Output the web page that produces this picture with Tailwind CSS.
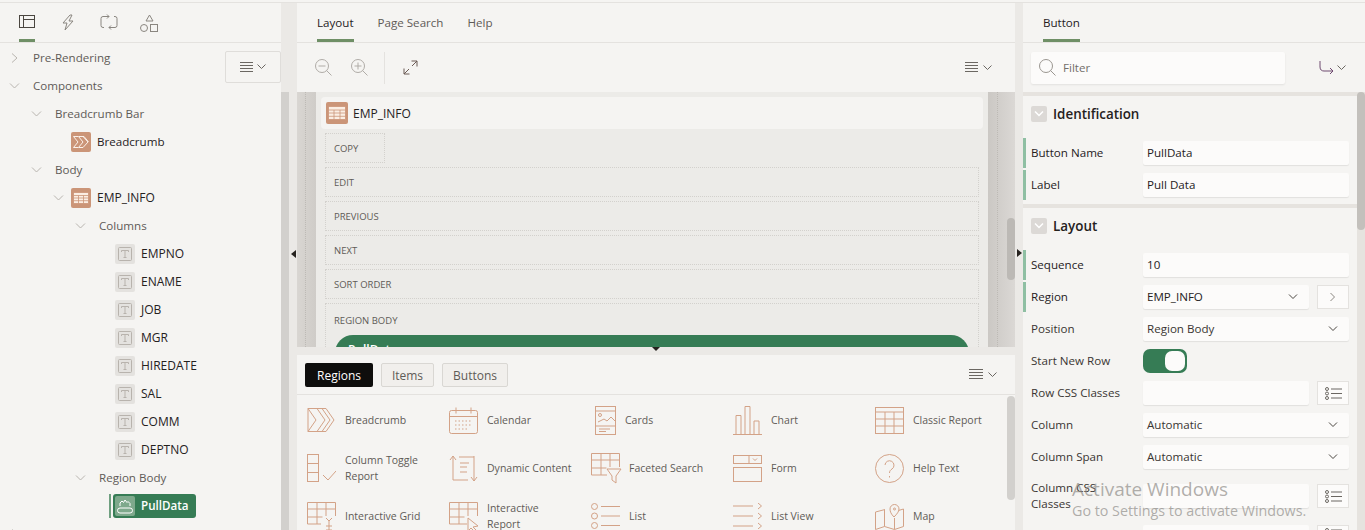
<!DOCTYPE html>
<html lang="en">
<head>
  <meta charset="UTF-8" />
  <title>Page Designer</title>
  <script src="https://cdn.jsdelivr.net/npm/@tailwindcss/browser@4"></script>
</head>
<body class="bg-[#f5f4f2] font-['Open_Sans',sans-serif] text-[11.6px] text-[#5f5b57]">
<div class="relative flex h-[530px] w-[1365px] overflow-hidden pt-[3px]">
  <div class="absolute left-0 top-[2px] h-px w-full bg-[#e4e2df]"></div>

  <!-- left panel -->
  <div class="flex h-full w-[281px] shrink-0 flex-col">
    <div class="flex h-[40px] shrink-0 border-b border-[#e4e2df] pl-[19px] pt-[11px]">
      <div class="h-[28px] w-[16px] border-b-[3px] border-[#6f8f66]">
        <svg width="16" height="15" viewBox="0 0 16 15" fill="none" stroke="#4a4640"><rect x=".5" y="1.500" width="15" height="12"/><path d="M4.500 1.500v12M4.500 5.500h11"/></svg>
      </div>
      <svg class="ml-[26px]" width="14" height="17" viewBox="0 0 14 17" fill="none" stroke="#8a8680"><path d="M9 1 2 9h4l-2 7 8-9H8l3-6z"/></svg>
      <svg class="ml-[25px]" width="18" height="17" viewBox="0 0 18 17" fill="none" stroke="#8a8680"><path d="M9 2.500H3a2 2 0 0 0-2 2v7a2 2 0 0 0 2 2h1M7 .5l2 2-2 2M9 13.500h6a2 2 0 0 0 2-2v-7a2 2 0 0 0-2-2h-1M11 11.500l-2 2 2 2"/></svg>
      <svg class="ml-[22px]" width="18" height="19" viewBox="0 0 18 19" fill="none" stroke="#8a8680"><path d="m9.500 1 3.500 6H6z"/><circle cx="4" cy="14" r="3.500"/><rect x="10.500" y="10.500" width="7" height="7"/></svg>
    </div>
    <div class="relative flex-1 overflow-hidden pt-px">
      <div class="flex h-7 items-center pl-[11px]">
        <svg class="w-[22px]" width="8" height="10" viewBox="0 0 22 10" fill="none" stroke="#b8b4af"><path d="m1 .5 5 4.500-5 4.500"/></svg>
        <span>Pre-Rendering</span>
      </div>
      <div class="flex h-7 items-center pl-[9px]">
        <svg class="w-[24px]" height="6" viewBox="0 0 24 6" fill="none" stroke="#b8b4af"><path d="m1 .5 4.500 4.500L10 .5"/></svg>
        <span>Components</span>
      </div>
      <div class="flex h-7 items-center pl-[31px]">
        <svg class="w-[24px]" height="6" viewBox="0 0 24 6" fill="none" stroke="#b8b4af"><path d="m1 .5 4.500 4.500L10 .5"/></svg>
        <span>Breadcrumb Bar</span>
      </div>
      <div class="flex h-7 items-center gap-[6px] pl-[71px] text-[#25211d]">
        <div class="flex h-5 w-5 items-center justify-center rounded-[2px] bg-[#cb9578]">
          <svg width="16" height="12" viewBox="0 0 16 12" fill="none" stroke="#fbf1ea"><path d="M.5.500h5L10 6l-4.500 5.500h-5L5 6zM6 .5h4L15 6l-5 5.500H6M10 .5h1L15.500 6"/></svg>
        </div>
        <span>Breadcrumb</span>
      </div>
      <div class="flex h-7 items-center pl-[31px]">
        <svg class="w-[24px]" height="6" viewBox="0 0 24 6" fill="none" stroke="#b8b4af"><path d="m1 .5 4.500 4.500L10 .5"/></svg>
        <span>Body</span>
      </div>
      <div class="flex h-7 items-center pl-[53px] text-[12px] text-[#25211d]">
        <svg class="w-[18px]" height="6" viewBox="0 0 18 6" fill="none" stroke="#b8b4af"><path d="m1 .5 4.500 4.500L10 .5"/></svg>
        <div class="mr-[6px] flex h-5 w-5 items-center justify-center rounded-[2px] bg-[#cb9578]">
          <svg width="16" height="12" viewBox="0 0 16 12" fill="#fbeee3" stroke="#cb9578" stroke-width=".8"><rect x=".5" y=".5" width="15" height="11" fill="#fbeee3"/><path d="M.5 3.500h15M.5 6h15M.5 8.700h15M5.500 3.500v8M10.500 3.500v8"/></svg>
        </div>
        <span>EMP_INFO</span>
      </div>
      <div class="flex h-7 items-center pl-[75px]">
        <svg class="w-[24px]" height="6" viewBox="0 0 24 6" fill="none" stroke="#b8b4af"><path d="m1 .5 4.500 4.500L10 .5"/></svg>
        <span>Columns</span>
      </div>
      <div class="flex h-7 items-center gap-[6px] pl-[115px] text-[12px] text-[#25211d]"><div class="flex h-5 w-5 items-center justify-center rounded-[2px] bg-[#e4e2df]"><svg width="14" height="14" viewBox="0 0 14 14" fill="none" stroke="#b8b3ad"><rect x=".5" y=".5" width="13" height="13" rx="1"/><path d="M3.500 5V3.500h7V5M7 3.500v7M5.500 10.500h3"/></svg></div><span>EMPNO</span></div>
      <div class="flex h-7 items-center gap-[6px] pl-[115px] text-[12px] text-[#25211d]"><div class="flex h-5 w-5 items-center justify-center rounded-[2px] bg-[#e4e2df]"><svg width="14" height="14" viewBox="0 0 14 14" fill="none" stroke="#b8b3ad"><rect x=".5" y=".5" width="13" height="13" rx="1"/><path d="M3.500 5V3.500h7V5M7 3.500v7M5.500 10.500h3"/></svg></div><span>ENAME</span></div>
      <div class="flex h-7 items-center gap-[6px] pl-[115px] text-[12px] text-[#25211d]"><div class="flex h-5 w-5 items-center justify-center rounded-[2px] bg-[#e4e2df]"><svg width="14" height="14" viewBox="0 0 14 14" fill="none" stroke="#b8b3ad"><rect x=".5" y=".5" width="13" height="13" rx="1"/><path d="M3.500 5V3.500h7V5M7 3.500v7M5.500 10.500h3"/></svg></div><span>JOB</span></div>
      <div class="flex h-7 items-center gap-[6px] pl-[115px] text-[12px] text-[#25211d]"><div class="flex h-5 w-5 items-center justify-center rounded-[2px] bg-[#e4e2df]"><svg width="14" height="14" viewBox="0 0 14 14" fill="none" stroke="#b8b3ad"><rect x=".5" y=".5" width="13" height="13" rx="1"/><path d="M3.500 5V3.500h7V5M7 3.500v7M5.500 10.500h3"/></svg></div><span>MGR</span></div>
      <div class="flex h-7 items-center gap-[6px] pl-[115px] text-[12px] text-[#25211d]"><div class="flex h-5 w-5 items-center justify-center rounded-[2px] bg-[#e4e2df]"><svg width="14" height="14" viewBox="0 0 14 14" fill="none" stroke="#b8b3ad"><rect x=".5" y=".5" width="13" height="13" rx="1"/><path d="M3.500 5V3.500h7V5M7 3.500v7M5.500 10.500h3"/></svg></div><span>HIREDATE</span></div>
      <div class="flex h-7 items-center gap-[6px] pl-[115px] text-[12px] text-[#25211d]"><div class="flex h-5 w-5 items-center justify-center rounded-[2px] bg-[#e4e2df]"><svg width="14" height="14" viewBox="0 0 14 14" fill="none" stroke="#b8b3ad"><rect x=".5" y=".5" width="13" height="13" rx="1"/><path d="M3.500 5V3.500h7V5M7 3.500v7M5.500 10.500h3"/></svg></div><span>SAL</span></div>
      <div class="flex h-7 items-center gap-[6px] pl-[115px] text-[12px] text-[#25211d]"><div class="flex h-5 w-5 items-center justify-center rounded-[2px] bg-[#e4e2df]"><svg width="14" height="14" viewBox="0 0 14 14" fill="none" stroke="#b8b3ad"><rect x=".5" y=".5" width="13" height="13" rx="1"/><path d="M3.500 5V3.500h7V5M7 3.500v7M5.500 10.500h3"/></svg></div><span>COMM</span></div>
      <div class="flex h-7 items-center gap-[6px] pl-[115px] text-[12px] text-[#25211d]"><div class="flex h-5 w-5 items-center justify-center rounded-[2px] bg-[#e4e2df]"><svg width="14" height="14" viewBox="0 0 14 14" fill="none" stroke="#b8b3ad"><rect x=".5" y=".5" width="13" height="13" rx="1"/><path d="M3.500 5V3.500h7V5M7 3.500v7M5.500 10.500h3"/></svg></div><span>DEPTNO</span></div>
      <div class="flex h-7 items-center pl-[75px]">
        <svg class="w-[24px]" height="6" viewBox="0 0 24 6" fill="none" stroke="#b8b4af"><path d="m1 .5 4.500 4.500L10 .5"/></svg>
        <span>Region Body</span>
      </div>
      <div class="flex h-7 items-center pl-[109px]">
        <div class="h-6 w-[2px] bg-[#6f9f80]"></div>
        <div class="ml-[2px] flex h-6 w-[83px] items-center gap-[6px] rounded-[3px] bg-[#367c55] pl-[2px] font-semibold text-white">
          <div class="flex h-5 w-5 items-center justify-center rounded-[2px] bg-[#7ea98c]">
            <svg width="16" height="16" viewBox="0 0 16 16" fill="none" stroke="#fff"><rect x=".5" y="10" width="15" height="5" rx="2.500"/><path d="M3 8V5l2-2 1.500 1.500L8 2l2 2.500L11 3.500l2 2V8"/></svg>
          </div>
          <span>PullData</span>
        </div>
      </div>
      <div class="flex h-7 items-center pl-[11px]">
        <svg class="w-[22px]" width="8" height="10" viewBox="0 0 22 10" fill="none" stroke="#b8b4af"><path d="m1 .5 5 4.500-5 4.500"/></svg>
        <span>Post-Rendering</span>
      </div>
      <div class="absolute left-[225px] top-[8px] flex h-[32px] w-[56px] items-center justify-center gap-[4px] rounded-[2px] border border-[#dfddda]">
        <svg width="13" height="11" viewBox="0 0 13 11" fill="none" stroke="#6b6762"><path d="M0 .5h13M0 3.500h13M0 6.500h13M0 9.500h13"/></svg>
        <svg width="9" height="6" viewBox="0 0 9 6" fill="none" stroke="#6b6762"><path d="m.5.500 4 4 4-4"/></svg>
      </div>
    </div>
  </div>

  <!-- left splitter -->
  <div class="flex w-[16px] shrink-0 bg-[#ebe9e6]">
    <div class="mt-[89px] h-[438px] w-[8px] bg-[#d2d0cd]"></div>
    <div class="flex w-[8px] items-center justify-center"><div class="mb-[26px] border-y-[4px] border-r-[5px] border-y-transparent border-r-[#26221e]"></div></div>
  </div>

  <!-- center -->
  <div class="flex h-full w-[718px] shrink-0 flex-col">
    <div class="flex h-[40px] shrink-0 gap-[24px] border-b border-[#e4e2df] pl-[20px]">
      <div class="h-[39px] border-b-[3px] border-[#6f8f66] pt-[12px] leading-[16px] text-[#25211d]">Layout</div>
      <div class="h-[39px] pt-[12px] leading-[16px]">Page Search</div>
      <div class="h-[39px] pt-[12px] leading-[16px]">Help</div>
    </div>
    <div class="flex h-[49px] shrink-0 items-center pl-[18px] pr-[23px]">
      <svg width="17" height="17" viewBox="0 0 17 17" fill="none" stroke="#b0aca7"><circle cx="7" cy="7" r="6.500"/><path d="M3.500 7h7M11.500 11.500l5 5"/></svg>
      <svg class="ml-[19px]" width="17" height="17" viewBox="0 0 17 17" fill="none" stroke="#b0aca7"><circle cx="7" cy="7" r="6.500"/><path d="M3.500 7h7M7 3.500v7M11.500 11.500l5 5"/></svg>
      <div class="ml-[16px] h-[32px] w-px bg-[#e4e2df]"></div>
      <svg class="ml-[18px]" width="15" height="15" viewBox="0 0 15 15" fill="none" stroke="#6b5a55"><path d="M1 14 6 9M9 6l5-5M8.500 1H14v5.500M1 8.500V14h5.500"/></svg>
      <div class="ml-auto flex items-center gap-[5px]">
        <svg width="13" height="11" viewBox="0 0 13 11" fill="none" stroke="#6b6762"><path d="M0 .5h13M0 3.500h13M0 6.500h13M0 9.500h13"/></svg>
        <svg width="9" height="6" viewBox="0 0 9 6" fill="none" stroke="#6b6762"><path d="m.5.500 4 4 4-4"/></svg>
      </div>
    </div>
    <div class="flex h-[255px] shrink-0 overflow-hidden bg-[#d9d6d2]">
      <div class="w-[19px] shrink-0 bg-gradient-to-r from-[#d9d6d2] to-[#cfccc8]"><div class="ml-[8px] h-full border-l border-dotted border-[#bdbab5]"></div></div>
      <div class="w-[672px] shrink-0 bg-[#ecebe8] px-[5px] pt-[5px]">
        <div class="flex h-[32px] items-center gap-[5px] rounded-[4px] bg-[#f5f4f2] pl-[5px] text-[12px] text-[#25211d]">
          <div class="flex h-[22px] w-[22px] items-center justify-center rounded-[2px] bg-[#cb9578]">
            <svg width="18" height="14" viewBox="0 0 18 14" stroke="#cb9578" stroke-width=".8"><rect x=".5" y=".5" width="17" height="13" fill="#fbeee3"/><path d="M.5 4h17M.5 7h17M.5 10.300h17M6 4v9.500M12 4v9.500"/></svg>
          </div>
          <span class="pt-px">EMP_INFO</span>
        </div>
        <div class="ml-[4px] mt-[4px] flex h-[30px] w-[60px] items-center border border-dotted border-[#d3d1cd] pl-[8px] pt-[2px] text-[9.500px]">COPY</div>
        <div class="ml-[4px] mt-[4px] flex h-[30px] w-[654px] items-center border border-dotted border-[#d3d1cd] pl-[8px] pt-[2px] text-[9.500px]">EDIT</div>
        <div class="ml-[4px] mt-[4px] flex h-[30px] w-[654px] items-center border border-dotted border-[#d3d1cd] pl-[8px] pt-[2px] text-[9.500px]">PREVIOUS</div>
        <div class="ml-[4px] mt-[4px] flex h-[30px] w-[654px] items-center border border-dotted border-[#d3d1cd] pl-[8px] pt-[2px] text-[9.500px]">NEXT</div>
        <div class="ml-[4px] mt-[4px] flex h-[30px] w-[654px] items-center border border-dotted border-[#d3d1cd] pl-[8px] pt-[2px] text-[9.500px]">SORT ORDER</div>
        <div class="ml-[4px] mt-[4px] h-[60px] w-[654px] border border-dotted border-[#d3d1cd] pl-[8px] pt-[10px] text-[9.500px]">
          <div class="leading-[14px]">REGION BODY</div>
          <div class="ml-px mt-[7px] h-[36px] w-[634px] rounded-[18px] bg-[#367c55] pl-[13px] pt-[6px] text-[12px] font-semibold text-white">PullData</div>
        </div>
      </div>
      <div class="relative flex-1 bg-gradient-to-r from-[#cbc8c4] to-[#dbd8d5]">
        <div class="ml-[9px] h-full border-l border-dotted border-[#bdbab5]"></div>
        <div class="absolute right-0 top-[126px] h-[62px] w-[8px] rounded-[4px] bg-[#bcb9b5]"></div>
      </div>
    </div>
    <div class="flex h-[8px] shrink-0 items-start justify-center bg-[#ebe9e6]">
      <div class="border-x-[4px] border-t-[4px] border-x-transparent border-t-[#26221e]"></div>
    </div>
    <div class="flex h-[40px] shrink-0 items-center gap-[8px] border-b border-[#e4e2df] pl-[8px] pr-[18px]">
      <div class="flex h-[24px] w-[68px] items-center justify-center rounded-[2px] bg-[#0f0e0d] pt-[2px] text-[12px] text-white">Regions</div>
      <div class="flex h-[24px] w-[53px] items-center justify-center rounded-[2px] border border-[#d9d7d3] bg-[#f1efec] pt-[2px] text-[12px]">Items</div>
      <div class="flex h-[24px] w-[66px] items-center justify-center rounded-[2px] border border-[#d9d7d3] bg-[#f1efec] pt-[2px] text-[12px]">Buttons</div>
      <div class="ml-auto flex items-center gap-[5px]">
        <svg width="14" height="11" viewBox="0 0 14 11" fill="none" stroke="#6b6762"><path d="M0 .5h14M0 3.500h14M0 6.500h14M0 9.500h14"/></svg>
        <svg width="9" height="6" viewBox="0 0 9 6" fill="none" stroke="#6b6762"><path d="m.5.500 4 4 4-4"/></svg>
      </div>
    </div>
    <div class="relative grid flex-1 auto-rows-[48px] grid-cols-[142px_142px_142px_142px_142px] overflow-hidden pl-[10px] pt-px text-[10.500px] leading-[16px]">
      <div class="flex items-center gap-[9px]">
        <svg class="shrink-0" width="29" height="26" viewBox="0 0 29 26" fill="none" stroke="#d3a287"><path d="M1 1.500h9l8 11.500-8 11.500H1zM1 1.500l8 11.500-8 11.500M10 1.500h9l8 11.500-8 11.500h-9M19 1.500h-4l8 11.500-8 11.500h4"/></svg>
        <span>Breadcrumb</span>
      </div>
      <div class="flex items-center gap-[9px]">
        <svg class="shrink-0" width="29" height="27" viewBox="0 0 29 27" fill="none" stroke="#d3a287"><rect x=".5" y="3.500" width="28" height="23" rx="2"/><path d="M.5 9.500h28M7 .5v6M22 .5v6"/><path d="M6 14h17M6 18h17M6 22h14" stroke-dasharray="1.500 2"/></svg>
        <span>Calendar</span>
      </div>
      <div class="flex items-center gap-[9px]">
        <svg class="mx-[4px] shrink-0" width="21" height="29" viewBox="0 0 21 29" fill="none" stroke="#d3a287"><rect x=".5" y=".5" width="20" height="28"/><path d="M.5 5h20M.5 20h20"/><circle cx="5" cy="9" r="1.500"/><path d="m3 16 6-3 3 2 4-4 4 4M4 23h11M4 25.500h7"/></svg>
        <span class="-ml-[4px]">Cards</span>
      </div>
      <div class="flex items-center gap-[9px]">
        <svg class="shrink-0" width="29" height="29" viewBox="0 0 29 29" fill="none" stroke="#d3a287"><path d="M0 28.500h29M3 28V9.500h5V28M12 28V.5h5V28M21 28V15h5v13"/></svg>
        <span>Chart</span>
      </div>
      <div class="flex items-center gap-[9px]">
        <svg class="shrink-0" width="29" height="27" viewBox="0 0 29 27" fill="none" stroke="#d3a287"><rect x=".5" y=".5" width="28" height="26"/><path d="M.5 5h28M.5 12h28M.5 19h28M10 5v22M19 5v22"/></svg>
        <span>Classic Report</span>
      </div>

      <div class="flex items-center gap-[9px]">
        <svg class="shrink-0" width="29" height="28" viewBox="0 0 29 28" fill="none" stroke="#d3a287"><rect x=".5" y=".5" width="11" height="27"/><path d="M.5 9.500h11M.5 18.500h11M16 21l5 5 8-9"/></svg>
        <span>Column Toggle<br>Report</span>
      </div>
      <div class="flex items-center gap-[9px]">
        <svg class="shrink-0" width="29" height="27" viewBox="0 0 29 27" fill="none" stroke="#d3a287"><path d="M4 25V1M1 5l3-4 3 4M25 1v25M22 22l3 4 3-4M10 2h15M4 25h15M11 8h9M11 12h7M11 17h7"/></svg>
        <span>Dynamic Content</span>
      </div>
      <div class="flex items-center gap-[9px]">
        <svg class="shrink-0" width="31" height="31" viewBox="0 0 31 31" fill="none" stroke="#d3a287"><path d="M16 22H.5V.5h28V14M.5 7h28M.5 15h15M10 .5V22M19 .5V14"/><path d="m16 16 14 0-5 7v7l-4-3v-4z"/></svg>
        <span class="-ml-[2px]">Faceted Search</span>
      </div>
      <div class="flex items-center gap-[9px]">
        <svg class="shrink-0" width="29" height="27" viewBox="0 0 29 27" fill="none" stroke="#d3a287"><rect x=".5" y=".5" width="28" height="8"/><path d="M16 .5v8M20 3.500l2 2 2-2"/><rect x=".5" y="12.500" width="28" height="14"/></svg>
        <span>Form</span>
      </div>
      <div class="flex items-center gap-[9px]">
        <svg class="shrink-0" width="29" height="29" viewBox="0 0 29 29" fill="none" stroke="#d3a287"><circle cx="14.500" cy="14.500" r="14"/><path d="M10 11a4.500 4.500 0 1 1 7 4c-1.500 1-2.500 2-2.500 4M14.500 22v1.500"/></svg>
        <span>Help Text</span>
      </div>

      <div class="flex items-center gap-[9px]">
        <svg class="shrink-0" width="29" height="29" viewBox="0 0 29 29" fill="none" stroke="#d3a287"><path d="M14 22H.5V.5h28V14M.5 7h28M.5 15h15M10 .5V22M19 .5V14M19 16l3 3 3-3M22 19v10M19 24h6M19 28h6"/></svg>
        <span>Interactive Grid</span>
      </div>
      <div class="flex items-center gap-[9px]">
        <svg class="shrink-0" width="31" height="29" viewBox="0 0 31 29" fill="none" stroke="#d3a287"><path d="M18 22H.5V.5h28V14M.5 7h28M.5 15h15M10 .5V22M19 .5V14M19 16v13l3-3 3 3 2-1-3-3 5-1z"/></svg>
        <span class="-ml-[2px]">Interactive<br>Report</span>
      </div>
      <div class="flex items-center gap-[9px]">
        <svg class="shrink-0" width="29" height="26" viewBox="0 0 29 26" fill="none" stroke="#d3a287"><circle cx="3.500" cy="3.500" r="3"/><circle cx="3.500" cy="13" r="3"/><circle cx="3.500" cy="22.500" r="3"/><path d="M10 3.500h19M10 13h19M10 22.500h19"/></svg>
        <span>List</span>
      </div>
      <div class="flex items-center gap-[9px]">
        <svg class="shrink-0" width="29" height="26" viewBox="0 0 29 26" fill="none" stroke="#d3a287"><path d="M0 3h20M0 13h20M0 23h20M25 0l3.500 3L25 6M25 10l3.500 3-3.500 3M25 20l3.500 3-3.500 3"/></svg>
        <span>List View</span>
      </div>
      <div class="flex items-center gap-[9px]">
        <svg class="shrink-0" width="29" height="27" viewBox="0 0 29 27" fill="none" stroke="#d3a287"><path d="M10 6.500 .5 9v17.500l9-3 10 3 9-3V6l-5 1.500M9.500 7v16.500M19.500 15v11.500"/><path d="M19 14c-3-3-4-5.500-4-8a4.500 4.500 0 0 1 9 0c0 2.500-2 5-5 8z"/><circle cx="19.500" cy="6" r="1"/></svg>
        <span>Map</span>
      </div>
      <div class="absolute right-0 top-[1px] h-[104px] w-[8px] rounded-[4px] bg-[#d2d0cd]"></div>
    </div>
  </div>

  <!-- right splitter -->
  <div class="flex w-[8px] shrink-0 items-center justify-center bg-[#ebe9e6] pb-[2px]">
    <div class="mb-[26px] border-y-[4px] border-l-[5px] border-y-transparent border-l-[#26221e]"></div>
  </div>

  <!-- property editor -->
  <div class="flex h-full w-[342px] shrink-0 flex-col">
    <div class="flex h-[40px] shrink-0 border-b border-[#e4e2df] pl-[20px]">
      <div class="h-[39px] border-b-[3px] border-[#6f8f66] pt-[12px] leading-[16px] text-[#25211d]">Button</div>
    </div>
    <div class="flex h-[49px] shrink-0 items-center pl-[8px] pr-[19px]">
      <div class="flex h-[32px] w-[254px] items-center gap-[7px] rounded-[2px] bg-[#fcfbfa] pl-[8px] shadow-[0_1px_2px_rgba(0,0,0,0.08)]">
        <svg width="17" height="17" viewBox="0 0 17 17" fill="none" stroke="#9a9690"><circle cx="7" cy="7" r="6.500"/><path d="m11.500 11.500 5 5"/></svg>
        <span class="text-[#736f6a]">Filter</span>
      </div>
      <div class="ml-auto flex items-center gap-[3px]">
        <svg width="15" height="14" viewBox="0 0 15 14" fill="none" stroke="#6e4a70"><path d="M1 0v6c0 3 2 4 4 4h9M11 7l3 3-3 3"/></svg>
        <svg width="9" height="6" viewBox="0 0 9 6" fill="none" stroke="#6b6762"><path d="m.5.500 4 4 4-4"/></svg>
      </div>
    </div>
    <div class="flex flex-1 overflow-hidden">
      <div class="w-[334px] shrink-0 overflow-hidden">
        <div class="h-[4px] bg-[#e6e3df]"></div>
        <div class="mb-[5px] flex h-[36px] items-center gap-[6px] pl-[8px] text-[13.400px] font-semibold text-[#25211d]">
          <div class="flex h-4 w-4 items-center justify-center rounded-[2px] bg-[#dcd9d6]"><svg width="10" height="6" viewBox="0 0 10 6" fill="none" stroke="#fff" stroke-width="1.500"><path d="m1 .5 4 4 4-4"/></svg></div>
          <span>Identification</span>
        </div>
        <div class="flex h-8 items-center"><div class="h-[30px] w-[3px] bg-[#8fbfa3]"></div><span class="w-[117px] pl-[5px] text-[#25211d]">Button Name</span><div class="flex h-6 w-[206px] items-center rounded-[2px] bg-[#fcfbfa] pl-[4px] text-[#25211d] shadow-[0_1px_1px_rgba(0,0,0,0.08)]">PullData</div></div>
        <div class="flex h-8 items-center"><div class="h-[30px] w-[3px] bg-[#8fbfa3]"></div><span class="w-[117px] pl-[5px] text-[#25211d]">Label</span><div class="flex h-6 w-[206px] items-center rounded-[2px] bg-[#fcfbfa] pl-[4px] text-[#25211d] shadow-[0_1px_1px_rgba(0,0,0,0.08)]">Pull Data</div></div>
        <div class="mt-[3px] h-[4px] bg-[#e6e3df]"></div>
        <div class="mb-[5px] flex h-[36px] items-center gap-[6px] pl-[8px] text-[13.400px] font-semibold text-[#25211d]">
          <div class="flex h-4 w-4 items-center justify-center rounded-[2px] bg-[#dcd9d6]"><svg width="10" height="6" viewBox="0 0 10 6" fill="none" stroke="#fff" stroke-width="1.500"><path d="m1 .5 4 4 4-4"/></svg></div>
          <span>Layout</span>
        </div>
        <div class="flex h-8 items-center"><div class="h-[30px] w-[3px] bg-[#8fbfa3]"></div><span class="w-[117px] pl-[5px] text-[#25211d]">Sequence</span><div class="flex h-6 w-[206px] items-center rounded-[2px] bg-[#fcfbfa] pl-[4px] text-[#25211d] shadow-[0_1px_1px_rgba(0,0,0,0.08)]">10</div></div>
        <div class="flex h-8 items-center"><div class="h-[30px] w-[3px] bg-[#8fbfa3]"></div><span class="w-[117px] pl-[5px] text-[#25211d]">Region</span>
          <div class="flex h-6 w-[166px] items-center justify-between rounded-[2px] bg-[#fcfbfa] pl-[4px] pr-[11px] text-[#25211d] shadow-[0_1px_1px_rgba(0,0,0,0.08)]">EMP_INFO<svg width="10" height="6" viewBox="0 0 10 6" fill="none" stroke="#4a4640"><path d="m1 .5 4 4 4-4"/></svg></div>
          <div class="ml-[8px] flex h-[24px] w-[32px] items-center justify-center border border-[#e4e2df] bg-[#fcfbfa]"><svg width="6" height="10" viewBox="0 0 6 10" fill="none" stroke="#8a8680"><path d="m.5 1 4 4-4 4"/></svg></div>
        </div>
        <div class="flex h-8 items-center pl-[3px]"><span class="w-[117px] pl-[5px] text-[#3a3632]">Position</span><div class="flex h-6 w-[206px] items-center justify-between rounded-[2px] bg-[#fcfbfa] pl-[4px] pr-[11px] text-[#3a3632] shadow-[0_1px_1px_rgba(0,0,0,0.08)]">Region Body<svg width="10" height="6" viewBox="0 0 10 6" fill="none" stroke="#4a4640"><path d="m1 .5 4 4 4-4"/></svg></div></div>
        <div class="flex h-8 items-center pl-[3px]"><span class="w-[117px] pl-[5px] text-[#3a3632]">Start New Row</span><div class="flex h-6 w-[44px] items-center justify-end rounded-[7px] bg-[#367c55] pr-[2px]"><div class="h-5 w-5 rounded-[7px] bg-[#fcfbfa]"></div></div></div>
        <div class="flex h-8 items-center pl-[3px]"><span class="w-[117px] pl-[5px] text-[#3a3632]">Row CSS Classes</span><div class="h-6 w-[166px] rounded-[2px] bg-[#fcfbfa] shadow-[0_1px_1px_rgba(0,0,0,0.08)]"></div>
          <div class="ml-[8px] flex h-[24px] w-[32px] items-center justify-center border border-[#e4e2df] bg-[#fcfbfa]"><svg width="17" height="13" viewBox="0 0 17 13" fill="none" stroke="#6b6762"><circle cx="2" cy="2" r="1.500"/><circle cx="2" cy="6.500" r="1.500"/><circle cx="2" cy="11" r="1.500"/><path d="M6 2h11M6 6.500h11M6 11h11"/></svg></div>
        </div>
        <div class="flex h-8 items-center pl-[3px]"><span class="w-[117px] pl-[5px] text-[#3a3632]">Column</span><div class="flex h-6 w-[206px] items-center justify-between rounded-[2px] bg-[#fcfbfa] pl-[4px] pr-[11px] text-[#3a3632] shadow-[0_1px_1px_rgba(0,0,0,0.08)]">Automatic<svg width="10" height="6" viewBox="0 0 10 6" fill="none" stroke="#4a4640"><path d="m1 .5 4 4 4-4"/></svg></div></div>
        <div class="flex h-8 items-center pl-[3px]"><span class="w-[117px] pl-[5px] text-[#3a3632]">Column Span</span><div class="flex h-6 w-[206px] items-center justify-between rounded-[2px] bg-[#fcfbfa] pl-[4px] pr-[11px] text-[#3a3632] shadow-[0_1px_1px_rgba(0,0,0,0.08)]">Automatic<svg width="10" height="6" viewBox="0 0 10 6" fill="none" stroke="#4a4640"><path d="m1 .5 4 4 4-4"/></svg></div></div>
        <div class="flex h-[46px] items-center pl-[3px]"><span class="w-[117px] pl-[5px] leading-[16px] text-[#3a3632]">Column CSS<br>Classes</span><div class="h-6 w-[166px] rounded-[2px] bg-[#fcfbfa] shadow-[0_1px_1px_rgba(0,0,0,0.08)]"></div>
          <div class="ml-[8px] flex h-[24px] w-[32px] items-center justify-center border border-[#e4e2df] bg-[#fcfbfa]"><svg width="17" height="13" viewBox="0 0 17 13" fill="none" stroke="#6b6762"><circle cx="2" cy="2" r="1.500"/><circle cx="2" cy="6.500" r="1.500"/><circle cx="2" cy="11" r="1.500"/><path d="M6 2h11M6 6.500h11M6 11h11"/></svg></div>
        </div>
        <div class="mt-[6px] flex h-8 items-start pl-[3px]"><span class="w-[117px]"></span><div class="h-6 w-[166px] rounded-[2px] bg-[#fcfbfa]"></div>
          <div class="ml-[8px] flex h-[24px] w-[32px] items-start justify-center border border-[#e4e2df] bg-[#fcfbfa] pt-[2px]"><svg width="17" height="13" viewBox="0 0 17 13" fill="none" stroke="#6b6762"><circle cx="2" cy="2" r="1.500"/><path d="M6 2h11"/></svg></div>
        </div>
      </div>
      <div class="flex-1 bg-[#e6e3df]"><div class="h-[138px] w-[8px] rounded-[4px] bg-[#c3c0bc]"></div></div>
    </div>
  </div>

  <!-- windows watermark -->
  <div class="pointer-events-none absolute left-[1072px] top-[476px] text-[#8f8c88]/70">
    <div class="text-[19px] leading-[26px]">Activate Windows</div>
    <div class="text-[14.300px] leading-[18px]">Go to Settings to activate Windows.</div>
  </div>
</div>
</body>
</html>
